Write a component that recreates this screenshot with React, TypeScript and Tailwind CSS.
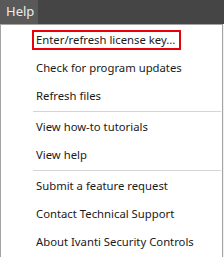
const font = { fontFamily: '"Noto Sans", "Open Sans", sans-serif' }

function Item({ label }: { label: string }) {
  return (
    <div className="h-[28px] flex items-center pl-[35px] text-[11.3px] text-[#1a1a1a] whitespace-nowrap">
      {label}
    </div>
  )
}

function Separator() {
  return (
    <div className="h-[3px] flex items-center pl-[32px] pr-[1px]">
      <div className="h-px w-full bg-[#d5d5d5]" />
    </div>
  )
}

export default function App() {
  return (
    <div className="w-[224px] h-[257px] overflow-hidden bg-[#f0f0f0]" style={font}>
      <div className="h-[24px] flex bg-[#454545]">
        <div className="w-[38px] h-full bg-[#595959] flex items-center pl-[6px] text-[13px] text-[#ececec]">
          Help
        </div>
      </div>
      <div className="w-[223px] h-[240px] bg-white border-l border-t border-r border-[#a3a3a3] pt-[1px]">
        <div className="h-[28px] flex items-center pl-[31px] text-[11.3px] text-[#1a1a1a] whitespace-nowrap">
          <span className="border-2 border-[#e8000b] h-[20px] flex items-center pl-[2px] pr-[4px]">
            Enter/refresh license key...
          </span>
        </div>
        <Item label="Check for program updates" />
        <Item label="Refresh files" />
        <Separator />
        <Item label="View how-to tutorials" />
        <Item label="View help" />
        <Separator />
        <Item label="Submit a feature request" />
        <Item label="Contact Technical Support" />
        <Item label="About Ivanti Security Controls" />
      </div>
    </div>
  )
}
